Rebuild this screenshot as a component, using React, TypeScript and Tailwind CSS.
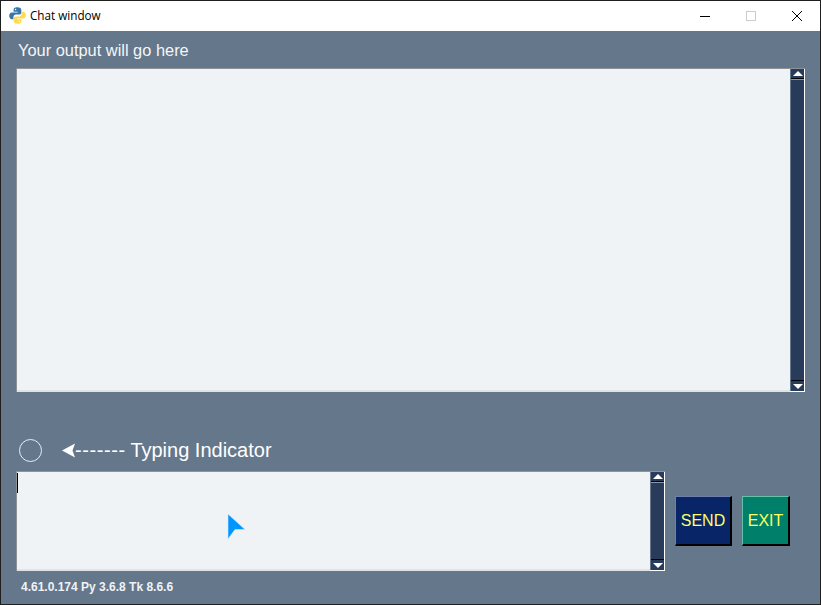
import React from "react";

function PyLogo() {
  return (
    <svg width="17" height="17" viewBox="0 0 16 16" className="shrink-0">
      <path d="M8 .2C5 .2 4.3 1.4 4.3 2.8V4.4H8.2V5.1H2.8C1.2 5.1.2 6.4.2 8.2S1.2 11.6 2.8 11.6H4.2V9.4C4.2 8 5.2 7.1 6.4 7.1H9.6C10.8 7.1 11.6 6.3 11.6 5.1V2.8C11.6 1.2 10.2.2 8 .2Z" fill="#3776ab" />
      <path d="M8 15.8C11 15.8 11.7 14.6 11.7 13.2V11.6H7.8V10.9H13.2C14.8 10.9 15.8 9.6 15.8 7.8S14.8 4.4 13.2 4.4H11.8V6.6C11.8 8 10.8 8.9 9.6 8.9H6.4C5.2 8.9 4.4 9.7 4.4 10.9V13.2C4.4 14.8 5.8 15.8 8 15.8Z" fill="#ffd94f" />
      <circle cx="6.2" cy="2.3" r=".7" fill="#fff" />
      <circle cx="9.8" cy="13.7" r=".7" fill="#fff" />
    </svg>
  );
}

function Arrow({ up }: { up: boolean }) {
  return (
    <svg width="10" height="5" viewBox="0 0 10 5" className="block">
      <polygon points={up ? "5,0 10,5 0,5" : "0,0 10,0 5,5"} fill="#ffffff" />
    </svg>
  );
}

function Scrollbar() {
  return (
    <div className="flex w-[15px] shrink-0 flex-col border-r border-b border-white bg-[#64778b] pl-px">
      <div className="flex h-[10px] w-[13px] shrink-0 items-center justify-center border-b border-black bg-[#283b5b]">
        <Arrow up />
      </div>
      <div className="flex-1 w-[13px] border-t border-b border-t-[#8a97a8] border-b-black bg-[#283b5b]" />
      <div className="flex h-[10px] w-[13px] shrink-0 items-center justify-center bg-[#283b5b]">
        <Arrow up={false} />
      </div>
    </div>
  );
}

function TextBox({ className, children }: { className: string; children?: React.ReactNode }) {
  return (
    <div className={`flex border-t border-l border-[#8f9296] ${className}`}>
      <div className="relative min-w-0 flex-1 border-b-2 border-[#dfe2e6] bg-[#eff3f6]">{children}</div>
      <Scrollbar />
    </div>
  );
}

function Btn({ label, className }: { label: string; className: string }) {
  return (
    <div className={`flex h-[50px] items-center justify-center border-t border-l border-b-2 border-r-2 border-b-black border-r-black pt-px text-[16px] text-[#ffff66] ${className}`}>
      {label}
    </div>
  );
}

export default function App() {
  return (
    <div className="flex h-[605px] w-[821px] flex-col overflow-hidden border border-[#1f1f1f] bg-[#64778b] font-['Liberation_Sans',sans-serif]">
      <div className="flex h-[30px] shrink-0 items-center bg-white">
        <div className="ml-2 flex items-center gap-[4px]">
          <PyLogo />
          <span className="font-['Open_Sans',sans-serif] text-[11.7px] text-black">Chat window</span>
        </div>
        <div className="ml-auto flex items-center">
          <div className="flex h-[30px] w-[46px] items-center justify-center">
            <div className="h-px w-[10px] bg-black" />
          </div>
          <div className="flex h-[30px] w-[46px] items-center justify-center">
            <div className="h-[10px] w-[10px] border border-[#cccccc]" />
          </div>
          <div className="flex h-[30px] w-[46px] items-center justify-center">
            <svg width="12" height="12" viewBox="0 0 12 12">
              <path d="M1 1L11 11M11 1L1 11" stroke="#000" strokeWidth="1" />
            </svg>
          </div>
        </div>
      </div>

      <div className="flex flex-1 flex-col pl-[15px]">
        <div className="flex h-[37px] shrink-0 items-center pl-[2px] pt-[2px] text-[16.4px] text-[#f4f6f8]">Your output will go here</div>
        <TextBox className="h-[324px] w-[789px] shrink-0" />

        <div className="mt-[39px] flex h-[40px] shrink-0 items-center pb-[2px] text-white">
          <div className="ml-[3px] h-[23px] w-[23px] rounded-full border border-[#e8eef4]" />
          <div className="ml-[20px] flex items-center text-[20px]">
            <svg width="14" height="15" viewBox="0 0 14 15" className="shrink-0">
              <polygon points="0,7.5 13,0.5 10.5,7.5 13,14.5" fill="#fff" />
            </svg>
            <span className="-ml-[1px] tracking-[0.6px]">-------</span>
            <span className="ml-[-1px]">&nbsp;Typing Indicator</span>
          </div>
        </div>

        <div className="flex shrink-0 items-center">
          <TextBox className="h-[100px] w-[649px] shrink-0">
            <div className="absolute left-0 top-px h-5 w-px bg-black" />
            <svg width="19" height="26" viewBox="0 0 19 26" className="absolute left-[210px] top-[42px]">
              <polygon points="1,0 18,15.5 8,15.5 1,25" fill="#0096ff" stroke="#d6e6f4" strokeWidth="0.6" />
            </svg>
          </TextBox>
          <div className="mb-px flex items-center">
            <Btn label="SEND" className="ml-[10px] w-[57px] border-t-[#6f7fae] border-l-[#6f7fae] bg-[#082567]" />
            <Btn label="EXIT" className="ml-[10px] w-[48px] border-t-[#66bfa8] border-l-[#66bfa8] bg-[#00806a]" />
          </div>
        </div>

        <div className="flex flex-1 items-center pb-[2px] pl-[5px] text-[12px] font-bold text-[#f0f3f6]">4.61.0.174 Py 3.6.8 Tk 8.6.6</div>
      </div>
    </div>
  );
}
